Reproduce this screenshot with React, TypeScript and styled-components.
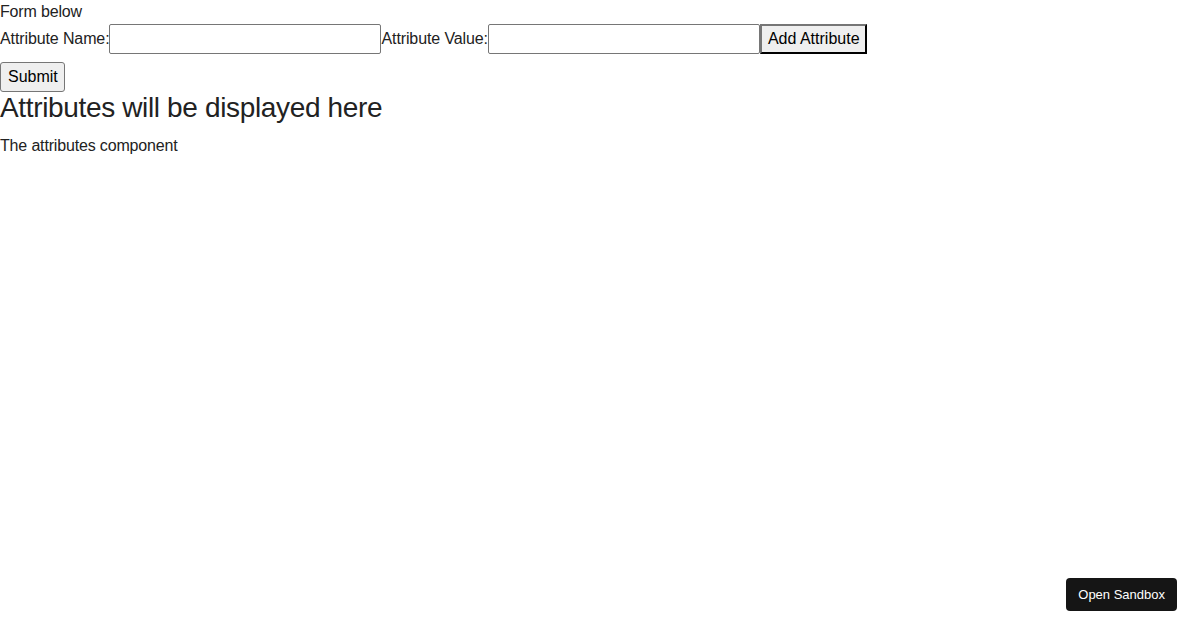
import React from "react";
import styled, { createGlobalStyle } from "styled-components";

const GlobalStyle = createGlobalStyle`
  body {
    margin: 0;
    background: #ffffff;
    color: #222222;
    font-family: "Liberation Sans", Arial, sans-serif;
    font-size: 16px;
    line-height: 1.5;
    letter-spacing: -0.01em;
  }
`;

const App: React.FC = () => {
  return (
    <>
      <GlobalStyle />
      <Page>
        <Intro>Form below</Intro>
        <Form onSubmit={(e) => e.preventDefault()}>
          <FieldRow>
            <Label htmlFor="attr-name">Attribute Name:</Label>
            <TextInput id="attr-name" type="text" />
            <Label htmlFor="attr-value">Attribute Value:</Label>
            <TextInput id="attr-value" type="text" />
            <AddButton type="button">Add Attribute</AddButton>
          </FieldRow>
          <SubmitButton type="submit">Submit</SubmitButton>
        </Form>
        <Heading>Attributes will be displayed here</Heading>
        <Note>The attributes component</Note>
      </Page>
      <SandboxButton type="button">Open Sandbox</SandboxButton>
    </>
  );
};

export default App;

const Page = styled.div`
  display: flex;
  flex-direction: column;
  align-items: flex-start;
`;

const Intro = styled.div`
  height: 24px;
`;

const Form = styled.form`
  display: flex;
  flex-direction: column;
  align-items: flex-start;
  gap: 8px;
`;

const FieldRow = styled.div`
  display: flex;
  align-items: center;
  height: 30px;
`;

const Label = styled.label`
  white-space: nowrap;
  letter-spacing: -0.007em;
`;

const TextInput = styled.input`
  box-sizing: border-box;
  width: 272px;
  height: 30px;
  margin: 0;
  padding: 1px 4px;
  border: 1px solid #767676;
  border-radius: 2px;
  font: 16px "Liberation Sans", Arial, sans-serif;
  background: #ffffff;
`;

const AddButton = styled.button`
  box-sizing: border-box;
  height: 30px;
  margin: 0;
  padding: 0 5px 0 6px;
  border: 2px outset #767676;
  border-right-color: #2b2b2b;
  border-bottom-color: #2b2b2b;
  background: #efefef;
  color: #000000;
  font: 16px "Liberation Sans", Arial, sans-serif;
  letter-spacing: 0;
`;

const SubmitButton = styled.button`
  box-sizing: border-box;
  height: 30px;
  margin: 0;
  padding: 0 6px 0 7px;
  border: 1px solid #767676;
  border-radius: 3px;
  background: #efefef;
  color: #000000;
  font: 16px "Liberation Sans", Arial, sans-serif;
  letter-spacing: 0;
`;

const Heading = styled.h1`
  margin: 0;
  font-size: 28px;
  font-weight: 400;
  line-height: normal;
  letter-spacing: -0.0125em;
`;

const Note = styled.p`
  margin: 10px 0 0;
`;

const SandboxButton = styled.button`
  position: fixed;
  right: 23px;
  bottom: 19px;
  height: 33px;
  padding: 0 12px;
  border: 0;
  border-radius: 4px;
  background: #151515;
  color: #ffffff;
  font: 13px "Liberation Sans", Arial, sans-serif;
  letter-spacing: 0;
`;
